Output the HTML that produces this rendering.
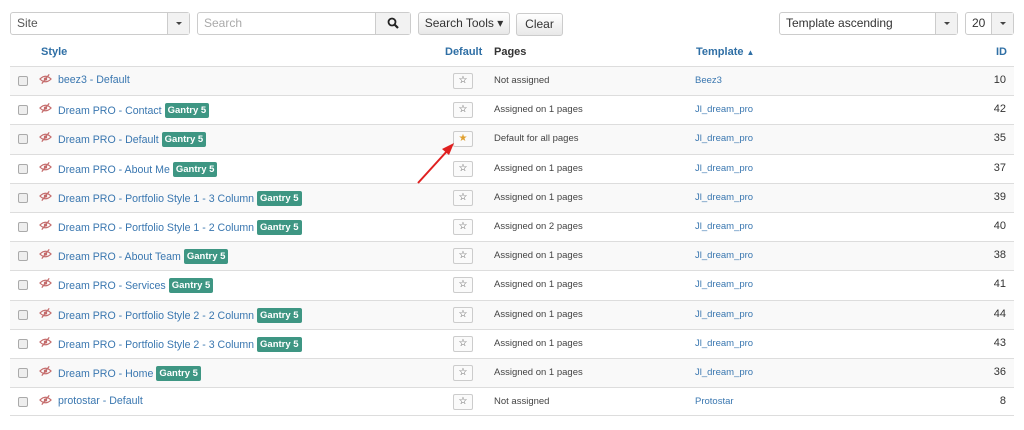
<!DOCTYPE html>
<html><head><meta charset="utf-8"><style>
*{box-sizing:border-box;margin:0;padding:0}
body{width:1024px;height:430px;background:#fff;font-family:"Liberation Sans",sans-serif;font-size:11px;color:#333;position:relative;overflow:hidden}
.abs{position:absolute}
.inp{position:absolute;border:1px solid #ccc;border-radius:3px;background:#fff;height:23px;font-size:12px;color:#555;line-height:21px;padding-left:6px}
.btn{position:absolute;border:1px solid #ccc;border-radius:3px;background:linear-gradient(#fff,#e8e8e8);height:23px;font-size:12px;color:#333;line-height:21px;text-align:center}
.car{position:absolute;right:0;top:0;width:22px;height:21px;border-left:1px solid #ccc;background:#f2f2f2}
.car:after{content:"";position:absolute;left:8px;top:9px;border:3px solid transparent;border-top:3px solid #444}
.hd{position:absolute;top:46px;font-weight:bold;font-size:11px;color:#2f6fa5}
.row{position:absolute;left:10px;width:1004px;height:29.2px;border-top:1px solid #ddd}
.row.s{background:#f9f9f9}
.cb{position:absolute;left:8px;top:9px;width:10px;height:10px;border:1px solid #aaa;border-radius:2px;background:#eee}
.ic{position:absolute;left:29px;top:7px}
.nm{position:absolute;left:48px;top:7px;font-size:10.6px;color:#3a77b0;white-space:nowrap}
.g{display:inline-block;background:#3e9683;color:#fff;font-weight:bold;font-size:9.5px;padding:2px 3px;border-radius:2px;margin-left:3px;vertical-align:1px}
.st{position:absolute;left:443px;top:6px;width:20px;height:16px;border:1px solid #ccc;border-radius:2px;background:#fafafa;font-size:10px;text-align:center;line-height:14px;color:#444}
.pg{position:absolute;left:484px;top:8px;font-size:9.5px;color:#444}
.tp{position:absolute;left:685px;top:8px;font-size:9.5px;color:#3a77b0}
.id{position:absolute;right:8px;top:7px;font-size:11px;color:#333}
</style></head><body>
<svg width="0" height="0" style="position:absolute"><defs><symbol id="e" viewBox="0 0 14 10"><path d="M1 5 Q7 -1 13 5 Q7 11 1 5Z" fill="none" stroke="#c46b6b" stroke-width="1.3"/><circle cx="7" cy="5" r="1.8" fill="#c46b6b"/><line x1="3" y1="10" x2="11" y2="0" stroke="#c46b6b" stroke-width="1.3"/></symbol></defs></svg>
<div class="inp" style="left:10px;top:12px;width:180px">Site<div class="car"></div></div>
<div class="inp" style="left:197px;top:12px;width:214px;color:#aaa">Search
<div class="abs" style="right:0;top:0;width:35px;height:21px;border-left:1px solid #ccc;background:#f2f2f2;text-align:center">
<svg width="13" height="13" viewBox="0 0 13 13" style="margin-top:4px"><circle cx="5" cy="5" r="3.5" fill="none" stroke="#222" stroke-width="1.8"/><line x1="7.5" y1="7.5" x2="11" y2="11" stroke="#222" stroke-width="2.2"/></svg></div></div>
<div class="btn" style="left:418px;top:12px;width:92px">Search Tools ▾</div>
<div class="btn" style="left:516px;top:13px;width:47px">Clear</div>
<div class="inp" style="left:779px;top:12px;width:179px;color:#333">Template ascending<div class="car"></div></div>
<div class="inp" style="left:965px;top:12px;width:49px;color:#333">20<div class="car"></div></div>
<div class="hd" style="left:41px">Style</div>
<div class="hd" style="left:445px">Default</div>
<div class="hd" style="left:494px;color:#333">Pages</div>
<div class="hd" style="left:696px">Template <span style="font-size:8px">▲</span></div>
<div class="hd" style="left:996px">ID</div>

<div class="row s" style="top:66px"><div class="cb"></div><svg class="ic" width="13" height="10"><use href="#e"/></svg><div class="nm">beez3 - Default</div><div class="st">☆</div><div class="pg">Not assigned</div><div class="tp">Beez3</div><div class="id">10</div></div>
<div class="row" style="top:95.2px"><div class="cb"></div><svg class="ic" width="13" height="10"><use href="#e"/></svg><div class="nm">Dream PRO - Contact<span class="g">Gantry 5</span></div><div class="st">☆</div><div class="pg">Assigned on 1 pages</div><div class="tp">Jl_dream_pro</div><div class="id">42</div></div>
<div class="row s" style="top:124.4px"><div class="cb"></div><svg class="ic" width="13" height="10"><use href="#e"/></svg><div class="nm">Dream PRO - Default<span class="g">Gantry 5</span></div><div class="st" style="color:#e0a030">★</div><div class="pg">Default for all pages</div><div class="tp">Jl_dream_pro</div><div class="id">35</div></div>
<div class="row" style="top:153.6px"><div class="cb"></div><svg class="ic" width="13" height="10"><use href="#e"/></svg><div class="nm">Dream PRO - About Me<span class="g">Gantry 5</span></div><div class="st">☆</div><div class="pg">Assigned on 1 pages</div><div class="tp">Jl_dream_pro</div><div class="id">37</div></div>
<div class="row s" style="top:182.8px"><div class="cb"></div><svg class="ic" width="13" height="10"><use href="#e"/></svg><div class="nm">Dream PRO - Portfolio Style 1 - 3 Column<span class="g">Gantry 5</span></div><div class="st">☆</div><div class="pg">Assigned on 1 pages</div><div class="tp">Jl_dream_pro</div><div class="id">39</div></div>
<div class="row" style="top:212px"><div class="cb"></div><svg class="ic" width="13" height="10"><use href="#e"/></svg><div class="nm">Dream PRO - Portfolio Style 1 - 2 Column<span class="g">Gantry 5</span></div><div class="st">☆</div><div class="pg">Assigned on 2 pages</div><div class="tp">Jl_dream_pro</div><div class="id">40</div></div>
<div class="row s" style="top:241.2px"><div class="cb"></div><svg class="ic" width="13" height="10"><use href="#e"/></svg><div class="nm">Dream PRO - About Team<span class="g">Gantry 5</span></div><div class="st">☆</div><div class="pg">Assigned on 1 pages</div><div class="tp">Jl_dream_pro</div><div class="id">38</div></div>
<div class="row" style="top:270.4px"><div class="cb"></div><svg class="ic" width="13" height="10"><use href="#e"/></svg><div class="nm">Dream PRO - Services<span class="g">Gantry 5</span></div><div class="st">☆</div><div class="pg">Assigned on 1 pages</div><div class="tp">Jl_dream_pro</div><div class="id">41</div></div>
<div class="row s" style="top:299.6px"><div class="cb"></div><svg class="ic" width="13" height="10"><use href="#e"/></svg><div class="nm">Dream PRO - Portfolio Style 2 - 2 Column<span class="g">Gantry 5</span></div><div class="st">☆</div><div class="pg">Assigned on 1 pages</div><div class="tp">Jl_dream_pro</div><div class="id">44</div></div>
<div class="row" style="top:328.8px"><div class="cb"></div><svg class="ic" width="13" height="10"><use href="#e"/></svg><div class="nm">Dream PRO - Portfolio Style 2 - 3 Column<span class="g">Gantry 5</span></div><div class="st">☆</div><div class="pg">Assigned on 1 pages</div><div class="tp">Jl_dream_pro</div><div class="id">43</div></div>
<div class="row s" style="top:358px"><div class="cb"></div><svg class="ic" width="13" height="10"><use href="#e"/></svg><div class="nm">Dream PRO - Home<span class="g">Gantry 5</span></div><div class="st">☆</div><div class="pg">Assigned on 1 pages</div><div class="tp">Jl_dream_pro</div><div class="id">36</div></div>
<div class="row" style="top:387.2px;border-bottom:1px solid #ddd"><div class="cb"></div><svg class="ic" width="13" height="10"><use href="#e"/></svg><div class="nm">protostar - Default</div><div class="st">☆</div><div class="pg">Not assigned</div><div class="tp">Protostar</div><div class="id">8</div></div>

<svg class="abs" style="left:410px;top:138px" width="50" height="50"><line x1="8" y1="45" x2="38" y2="12" stroke="#e02020" stroke-width="2"/><polygon points="44,5 32,11 39,17" fill="#e02020"/></svg>
</body></html>
